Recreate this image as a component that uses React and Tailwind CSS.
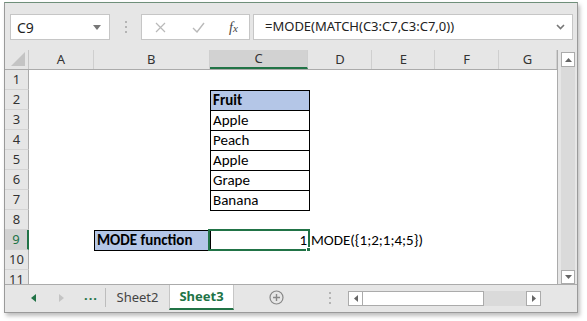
import { useState } from 'react'

const ui = { fontFamily: '"Noto Sans", "Open Sans", sans-serif' }
const cell = { fontFamily: 'Carlito, Lato, "Liberation Sans", sans-serif' }

const cols = [
  { key: 'A', w: 'w-[65px]' },
  { key: 'B', w: 'w-[116px]' },
  { key: 'C', w: 'w-[99px]' },
  { key: 'D', w: 'w-[64px]' },
  { key: 'E', w: 'w-[63px]' },
  { key: 'F', w: 'w-[64px]' },
  { key: 'G', w: 'w-[58px]' },
]

const fruits = ['Apple', 'Peach', 'Apple', 'Grape', 'Banana']

function FormulaBar() {
  return (
    <div className="flex h-[26px] items-stretch pl-[5px]" style={ui}>
      <div className="flex w-[100px] items-center justify-between border border-[#c6c6c6] bg-white pl-[6px] pr-[8px] text-[14px] text-[#222]">
        <span>C9</span>
        <svg width="8" height="5" viewBox="0 0 8 5">
          <path d="M0 0h8L4 5z" fill="#777" />
        </svg>
      </div>
      <div className="flex w-[31px] flex-col items-center justify-center gap-[3px]">
        <span className="h-[2px] w-[2px] bg-[#b4b4b4]" />
        <span className="h-[2px] w-[2px] bg-[#b4b4b4]" />
        <span className="h-[2px] w-[2px] bg-[#b4b4b4]" />
      </div>
      <div className="flex w-[109px] items-center border border-[#c6c6c6] bg-white">
        <svg className="ml-[13px]" width="11" height="11" viewBox="0 0 11 11">
          <path d="M1 1l9 9M10 1l-9 9" stroke="#b9b9b9" strokeWidth="1.2" />
        </svg>
        <svg className="ml-[26px]" width="13" height="11" viewBox="0 0 13 11">
          <path d="M1 6l4 4 7-9" stroke="#b9b9b9" strokeWidth="1.4" fill="none" />
        </svg>
        <span
          className="ml-[24px] text-[14px] italic text-[#444]"
          style={{ fontFamily: '"Liberation Serif", serif' }}
        >
          f<span className="text-[11px]">x</span>
        </span>
      </div>
      <div className="ml-[3px] flex w-[320px] items-center justify-between border border-[#c6c6c6] bg-white pl-[11px] pr-[7px] text-[13px] text-[#222]">
        <span>=MODE(MATCH(C3:C7,C3:C7,0))</span>
        <svg width="9" height="6" viewBox="0 0 9 6">
          <path d="M1 1l3.5 3.5L8 1" stroke="#777" strokeWidth="1.6" fill="none" />
        </svg>
      </div>
    </div>
  )
}

function Headers() {
  return (
    <div className="flex h-[19px] text-[13px] text-[#333]" style={ui}>
      <div className="flex w-[24px] items-end justify-end border-r border-[#c6c6c6] p-[3px]">
        <svg width="14" height="14" viewBox="0 0 14 14">
          <path d="M14 0V14H0z" fill="#c4c4c4" />
        </svg>
      </div>
      {cols.map((c) => (
        <div
          key={c.key}
          className={`${c.w} flex items-center justify-center border-r border-[#cfcfcf] ${
            c.key === 'C' ? 'border-b-2 border-b-[#217346] bg-[#d2d2d2]' : ''
          }`}
        >
          {c.key}
        </div>
      ))}
    </div>
  )
}

function RowHead({ n, selected }) {
  return (
    <div
      className={`flex h-[20px] w-[24px] shrink-0 items-center justify-center border-b border-[#d4d4d4] text-[13px] ${
        selected
          ? 'border-r-2 border-r-[#217346] bg-[#d2d2d2] text-[#217346]'
          : 'border-r border-r-[#ababab] text-[#333]'
      }`}
      style={ui}
    >
      {n}
    </div>
  )
}

function Row({ n, children }) {
  return (
    <div className="flex h-[20px]">
      <RowHead n={n} selected={n === 9} />
      <div className="flex flex-1 bg-white">{children}</div>
    </div>
  )
}

function Grid() {
  return (
    <div className="flex h-[215px] flex-col overflow-hidden border-t border-[#ababab]" style={cell}>
      <Row n={1} />
      {['Fruit', ...fruits].map((t, i) => (
        <Row key={i} n={i + 2}>
          <div className="w-[181px] shrink-0" />
          <div
            className={`relative z-10 flex h-[21px] w-[100px] shrink-0 items-center border-x border-b border-black pl-[2px] text-[15px] text-black ${
              i === 0 ? 'border-t bg-[#b4c6e7] font-bold' : ''
            }`}
          >
            {t}
          </div>
        </Row>
      ))}
      <Row n={8} />
      <Row n={9}>
        <div className="w-[65px] shrink-0" />
        <div className="relative z-10 flex h-[21px] w-[117px] shrink-0 items-center border border-black bg-[#b4c6e7] pl-[2px] text-[15px] font-bold text-black">
          MODE function
        </div>
        <div className="relative z-20 -ml-[3px] -mt-px flex h-[22px] w-[102px] shrink-0 items-center justify-end border-2 border-[#217346] pr-[1px] text-[15px] text-black">
          1
          <span className="absolute -bottom-[3px] -right-[3px] h-[5px] w-[5px] border border-white bg-[#217346]" />
        </div>
        <div className="flex items-center pl-[1px] text-[15px] text-black">MODE({'{'}1;2;1;4;5{'}'})</div>
      </Row>
      <Row n={10} />
      <Row n={11} />
    </div>
  )
}

function VScroll() {
  return (
    <div className="ml-[3px] mt-[2px] flex h-[232px] w-[14px] flex-col justify-between bg-[#dadada]">
      <div className="flex h-[15px] items-center justify-center border border-[#ababab] bg-white">
        <svg width="7" height="4" viewBox="0 0 7 4">
          <path d="M0 4h7L3.5 0z" fill="#666" />
        </svg>
      </div>
      <div className="flex h-[14px] items-center justify-center border border-[#ababab] bg-white">
        <svg width="7" height="4" viewBox="0 0 7 4">
          <path d="M0 0h7L3.5 4z" fill="#666" />
        </svg>
      </div>
    </div>
  )
}

function Tabs() {
  const [active] = useState('Sheet3')
  return (
    <div className="flex h-[26px] items-stretch border-t border-[#ababab] text-[13px]" style={ui}>
      <div className="flex w-[100px] items-center pl-[26px]">
        <svg width="5" height="8" viewBox="0 0 5 8">
          <path d="M5 0V8L0 4z" fill="#217346" />
        </svg>
        <svg className="ml-[23px]" width="5" height="8" viewBox="0 0 5 8">
          <path d="M0 0V8L5 4z" fill="#c4c4c4" />
        </svg>
        <span className="ml-[20px] pb-[4px] font-bold tracking-[1px] text-[#217346]">...</span>
      </div>
      <div className="my-[3px] w-px bg-[#bdbdbd]" />
      <div className="flex w-[63px] items-center justify-center text-[#444]">Sheet2</div>
      <div
        className={`flex w-[65px] items-center justify-center border-x border-b-2 border-x-[#c6c6c6] border-b-[#217346] bg-white font-bold ${
          active === 'Sheet3' ? 'text-[#217346]' : 'text-[#444]'
        }`}
      >
        Sheet3
      </div>
      <div className="flex w-[84px] items-center justify-center">
        <svg width="15" height="15" viewBox="0 0 15 15">
          <circle cx="7.5" cy="7.5" r="6.5" stroke="#888" strokeWidth="1.2" fill="none" />
          <path d="M7.5 4v7M4 7.5h7" stroke="#888" strokeWidth="1.4" />
        </svg>
      </div>
      <div className="flex w-[24px] flex-col items-center justify-center gap-[3px]">
        <span className="h-[2px] w-[2px] bg-[#b4b4b4]" />
        <span className="h-[2px] w-[2px] bg-[#b4b4b4]" />
        <span className="h-[2px] w-[2px] bg-[#b4b4b4]" />
      </div>
      <div className="ml-[6px] mt-[6px] flex h-[15px] w-[193px]">
        <div className="flex w-[15px] items-center justify-center border border-[#ababab] bg-white">
          <svg width="4" height="7" viewBox="0 0 4 7">
            <path d="M4 0V7L0 3.5z" fill="#666" />
          </svg>
        </div>
        <div className="w-[121px] border-y border-r border-[#ababab] bg-white" />
        <div className="flex-1 bg-[#dadada]" />
        <div className="flex w-[15px] items-center justify-center border border-[#ababab] bg-white">
          <svg width="4" height="7" viewBox="0 0 4 7">
            <path d="M0 0V7L4 3.5z" fill="#666" />
          </svg>
        </div>
      </div>
    </div>
  )
}

export default function App() {
  return (
    <div className="h-[321px] w-[587px] bg-white pl-[4px] pt-[2px]">
      <div className="h-[311px] w-[574px] border border-[#9a9a9a] border-t-[#6f8f7a] bg-[#e6e6e6] shadow-[2px_3px_4px_rgba(0,0,0,0.25)]">
        <div className="pt-[11px]">
          <FormulaBar />
        </div>
        <div className="mt-[10px] flex">
          <div className="flex w-[553px] flex-col border-r border-[#ababab]">
            <Headers />
            <Grid />
          </div>
          <VScroll />
        </div>
        <Tabs />
      </div>
    </div>
  )
}
